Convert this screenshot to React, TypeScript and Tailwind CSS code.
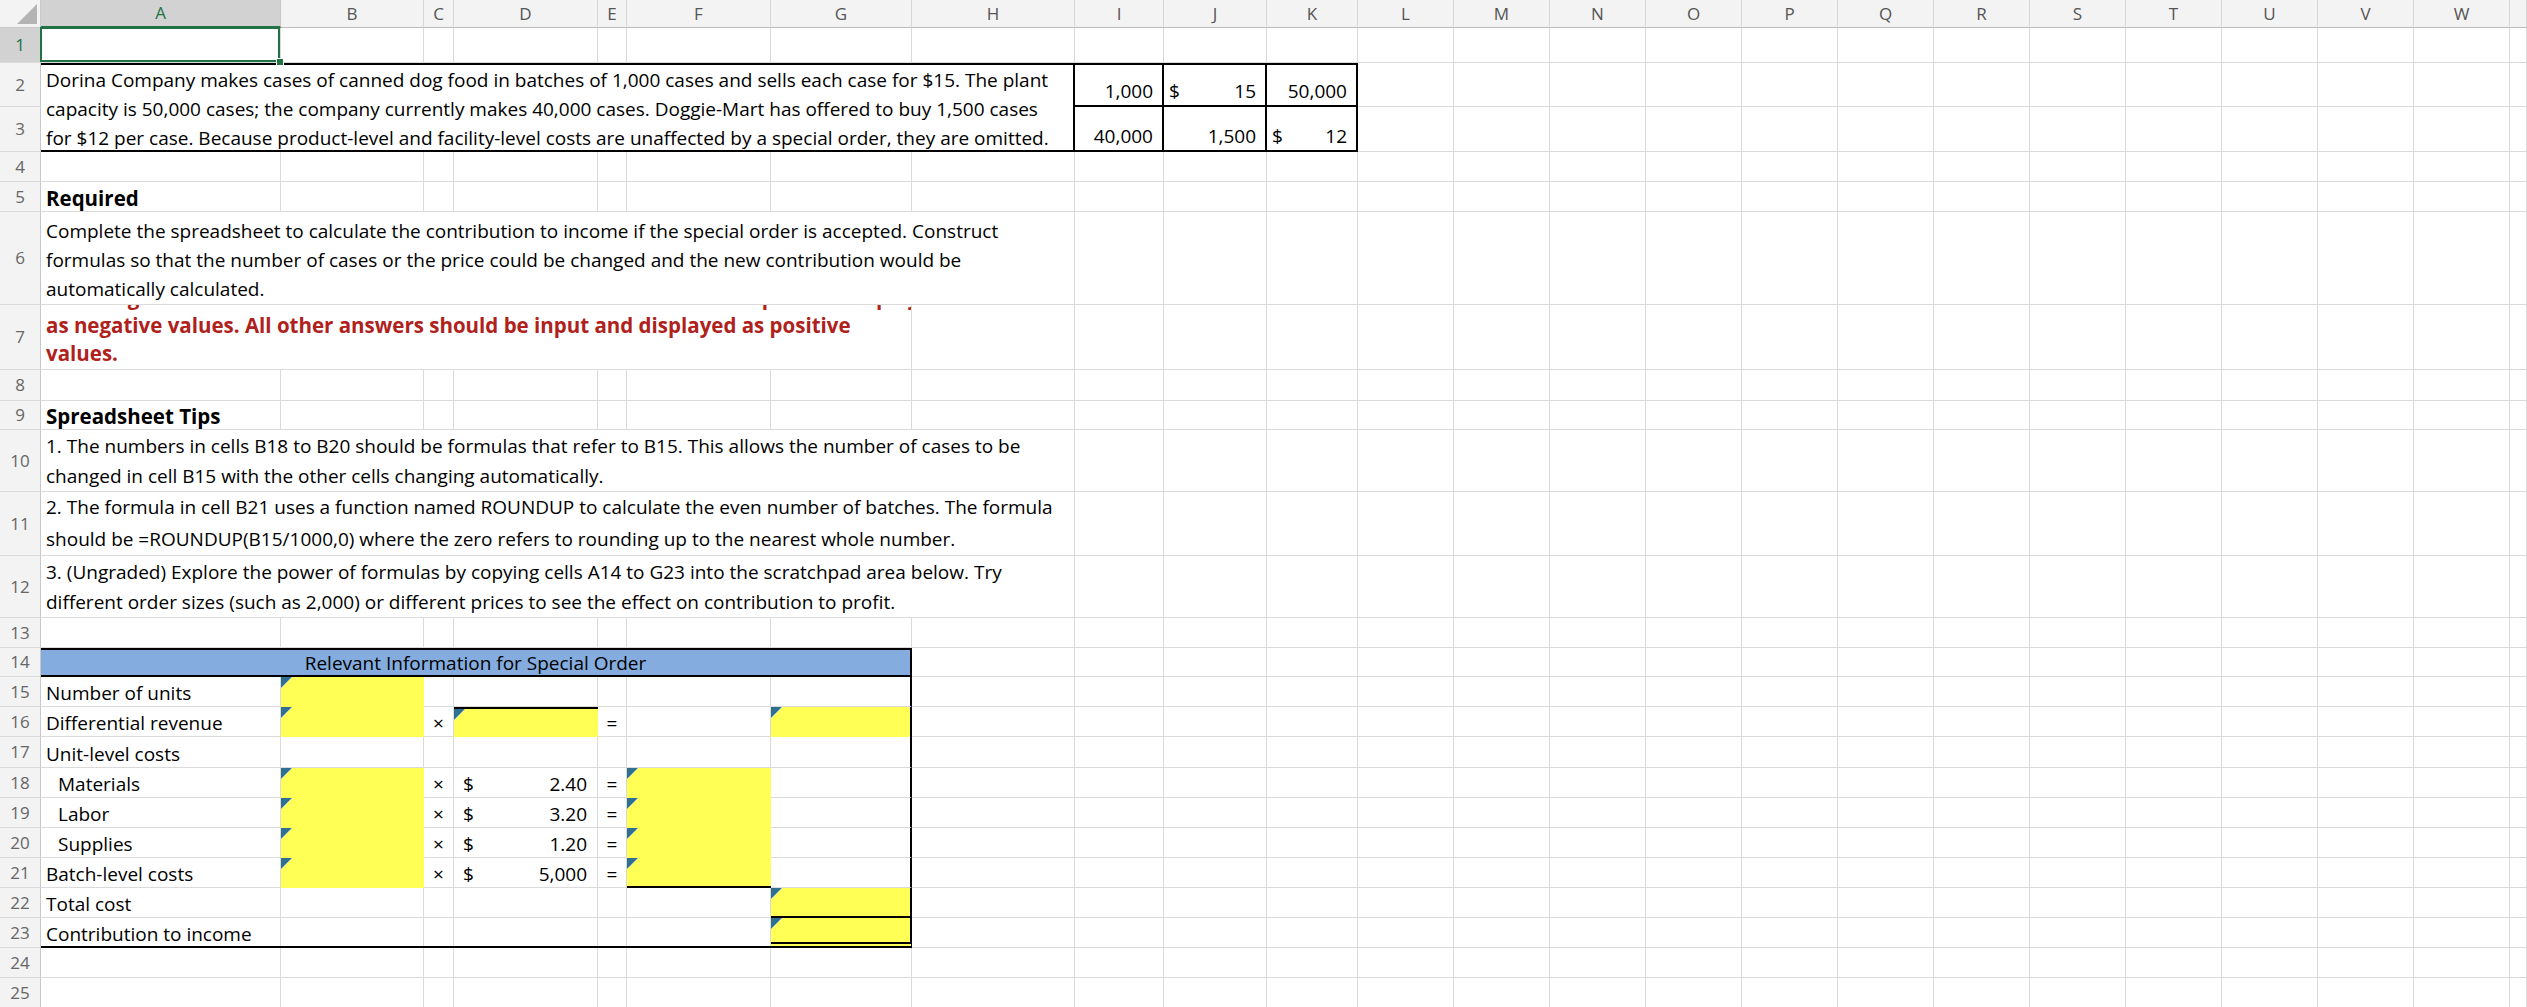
import React from "react";

// Excel-like sheet: one grid, cells auto-placed row by row
const G = "border-r border-b border-[#dadada]";
const YEL = "bg-[#ffff55]";

const COLS = ["A", "B", "C", "D", "E", "F", "G", "H", "I", "J", "K", "L", "M", "N", "O", "P", "Q", "R", "S", "T", "U", "V", "W", ""];

function Blanks({ n }: { n: number }) {
    return (
        <>
            {Array.from({ length: n }, (_, i) => (
                <div key={i} className={G} />
            ))}
        </>
    );
}

function RowHead({ n, active = false }: { n: number; active?: boolean }) {
    return (
        <div
            className={`flex items-center justify-center border-r border-b border-r-[#c8c8c8] border-b-[#dadada] text-[17px] ${
                active ? "bg-[#d2d2d2] text-[#217346]" : "bg-[#f3f3f3] text-[#666666]"
            }`}
        >
            {n}
        </div>
    );
}

function Tri() {
    return (
        <svg className="absolute left-0 top-0" width="11" height="11" viewBox="0 0 11 11">
            <polygon points="0,0 11,0 0,11" fill="#2f7090" />
            <line x1="11" y1="0" x2="0" y2="11" stroke="#9cc2d2" strokeWidth="1" />
        </svg>
    );
}

function Input({ className = "" }: { className?: string }) {
    return (
        <div className={`relative ${YEL} ${className}`}>
            <Tri />
        </div>
    );
}

function Txt({ children, className = "" }: { children?: React.ReactNode; className?: string }) {
    return (
        <div className={`${G} flex items-end pb-[2px] pl-[5px] leading-[22px] whitespace-nowrap ${className}`}>
            {children}
        </div>
    );
}

function Mid({ children, className = "" }: { children?: React.ReactNode; className?: string }) {
    return (
        <div className={`${G} flex items-end justify-center pb-[2px] leading-[22px] ${className}`}>{children}</div>
    );
}

function Money({ value }: { value: string }) {
    return (
        <div className={`${G} flex items-end justify-between pb-[2px] pl-[9px] pr-[10px] leading-[22px]`}>
            <span>$</span>
            <span>{value}</span>
        </div>
    );
}

export default function App() {
    return (
        <div className="w-[2527px] h-[1007px] overflow-hidden bg-white text-black text-[19px] font-['Open_Sans','Liberation_Sans',sans-serif]">
            <div className="grid grid-cols-[41px_240px_143px_30px_144px_29px_144px_141px_163px_89px_103px_91px_96px_96px_96px_96px_96px_96px_96px_96px_96px_96px_96px_96px_17px] grid-rows-[28px_35px_44px_45px_30px_30px_93px_65px_31px_29px_62px_64px_62px_30px_29px_30px_30px_31px_30px_30px_30px_30px_30px_30px_30px_30px]">
                {/* header row */}
                <div className="relative bg-[#f3f3f3] border-r border-b border-[#c8c8c8]">
                    <svg className="absolute right-[3px] bottom-[3px]" width="20" height="20" viewBox="0 0 20 20">
                        <polygon points="20,0 20,20 0,20" fill="#b4b4b4" />
                    </svg>
                </div>
                {COLS.map((c) =>
                    c === "A" ? (
                        <div
                            key={c}
                            className="flex items-center justify-center bg-[#d2d2d2] text-[#217346] text-[17px] border-r border-r-[#c8c8c8] border-b-2 border-b-[#217346]"
                        >
                            {c}
                        </div>
                    ) : (
                        <div
                            key={c || "x"}
                            className="flex items-center justify-center bg-[#f3f3f3] text-[#555555] text-[17px] border-r border-b border-r-[#d6d6d6] border-b-[#bdbdbd]"
                        >
                            {c}
                        </div>
                    )
                )}

                {/* row 1 */}
                <RowHead n={1} active />
                <div className={`${G} relative`}>
                    <div className="absolute -left-[1px] -top-[1px] right-0 bottom-0 border-2 border-[#217346]" />
                    <div className="absolute -right-[4px] -bottom-[4px] w-[8px] h-[8px] bg-[#217346] border border-white" />
                </div>
                <Blanks n={23} />

                {/* rows 2-3 */}
                <RowHead n={2} />
                <div className="col-span-8 row-span-2 flex flex-col justify-end border-t-2 border-b-2 border-r-2 border-black pl-[5px] leading-[29px] whitespace-nowrap">
                    <div className="translate-y-[3px]">
                        <div>Dorina Company makes cases of canned dog food in batches of 1,000 cases and sells each case for $15. The plant</div>
                        <div>capacity is 50,000 cases; the company currently makes 40,000 cases. Doggie-Mart has offered to buy 1,500 cases</div>
                        <div>for $12 per case. Because product-level and facility-level costs are unaffected by a special order, they are omitted.</div>
                    </div>
                </div>
                <div className="flex items-end justify-end pr-[9px] pb-[3px] leading-[22px] border-t-2 border-b-2 border-r-2 border-black">1,000</div>
                <div className="flex items-end justify-between pl-[5px] pr-[9px] pb-[3px] leading-[22px] border-t-2 border-b-2 border-r-2 border-black">
                    <span>$</span>
                    <span>15</span>
                </div>
                <div className="flex items-end justify-end pr-[9px] pb-[3px] leading-[22px] border-t-2 border-b-2 border-r-2 border-black">50,000</div>
                <Blanks n={13} />

                <RowHead n={3} />
                <div className="flex items-end justify-end pr-[9px] pb-[3px] leading-[22px] border-b-2 border-r-2 border-black">40,000</div>
                <div className="flex items-end justify-end pr-[9px] pb-[3px] leading-[22px] border-b-2 border-r-2 border-black">1,500</div>
                <div className="flex items-end justify-between pl-[5px] pr-[9px] pb-[3px] leading-[22px] border-b-2 border-r-2 border-black">
                    <span>$</span>
                    <span>12</span>
                </div>
                <Blanks n={13} />

                {/* row 4 */}
                <RowHead n={4} />
                <Blanks n={24} />

                {/* row 5 */}
                <RowHead n={5} />
                <Txt className="font-bold text-[20.5px]">Required</Txt>
                <Blanks n={23} />

                {/* row 6 */}
                <RowHead n={6} />
                <div className={`${G} col-span-8 flex flex-col justify-end pl-[5px] leading-[29px] whitespace-nowrap`}>
                    <div>Complete the spreadsheet to calculate the contribution to income if the special order is accepted. Construct</div>
                    <div>formulas so that the number of cases or the price could be changed and the new contribution would be</div>
                    <div>automatically calculated.</div>
                </div>
                <Blanks n={16} />

                {/* row 7 - first line is cut off by the row height */}
                <RowHead n={7} />
                <div className={`${G} col-span-7 overflow-hidden flex flex-col justify-end pl-[5px] pb-[2px] leading-[28px] font-bold text-[20.5px] text-[#b0211c] whitespace-nowrap`}>
                    <div>All changes to income that are reductions in contribution should be input and displayed</div>
                    <div>as negative values. All other answers should be input and displayed as positive</div>
                    <div>values.</div>
                </div>
                <Blanks n={17} />

                {/* row 8 */}
                <RowHead n={8} />
                <Blanks n={24} />

                {/* row 9 */}
                <RowHead n={9} />
                <Txt className="font-bold text-[20.5px]">Spreadsheet Tips</Txt>
                <Blanks n={23} />

                {/* rows 10-12 */}
                <RowHead n={10} />
                <div className={`${G} col-span-8 flex flex-col justify-end pl-[5px] leading-[30px] whitespace-nowrap`}>
                    <div>1. The numbers in cells B18 to B20 should be formulas that refer to B15. This allows the number of cases to be</div>
                    <div>changed in cell B15 with the other cells changing automatically.</div>
                </div>
                <Blanks n={16} />

                <RowHead n={11} />
                <div className={`${G} col-span-8 flex flex-col justify-end pl-[5px] leading-[32px] whitespace-nowrap`}>
                    <div>2. The formula in cell B21 uses a function named ROUNDUP to calculate the even number of batches. The formula</div>
                    <div>should be =ROUNDUP(B15/1000,0) where the zero refers to rounding up to the nearest whole number.</div>
                </div>
                <Blanks n={16} />

                <RowHead n={12} />
                <div className={`${G} col-span-8 flex flex-col justify-end pl-[5px] leading-[30px] whitespace-nowrap`}>
                    <div>3. (Ungraded) Explore the power of formulas by copying cells A14 to G23 into the scratchpad area below. Try</div>
                    <div>different order sizes (such as 2,000) or different prices to see the effect on contribution to profit.</div>
                </div>
                <Blanks n={16} />

                {/* row 13 */}
                <RowHead n={13} />
                <Blanks n={24} />

                {/* row 14: table title */}
                <RowHead n={14} />
                <div className="col-span-7 flex items-end justify-center pb-[1px] leading-[22px] bg-[#84acdf] border-t-2 border-b-2 border-r-2 border-black">
                    Relevant Information for Special Order
                </div>
                <Blanks n={17} />

                {/* row 15 */}
                <RowHead n={15} />
                <Txt>Number of units</Txt>
                <Input />
                <Mid />
                <Mid />
                <Mid />
                <Mid />
                <div className="border-r-2 border-b border-r-black border-b-[#dadada]" />
                <Blanks n={17} />

                {/* row 16 */}
                <RowHead n={16} />
                <Txt>Differential revenue</Txt>
                <Input />
                <Mid>×</Mid>
                <Input className="border-t-2 border-black" />
                <Mid>=</Mid>
                <Mid />
                <Input className="border-r-2 border-black" />
                <Blanks n={17} />

                {/* row 17 */}
                <RowHead n={17} />
                <Txt>Unit-level costs</Txt>
                <Mid />
                <Mid />
                <Mid />
                <Mid />
                <Mid />
                <div className="border-r-2 border-b border-r-black border-b-[#dadada]" />
                <Blanks n={17} />

                {/* rows 18-20 */}
                {[
                    ["Materials", "2.40", 18],
                    ["Labor", "3.20", 19],
                    ["Supplies", "1.20", 20],
                ].map(([label, price, n]) => (
                    <React.Fragment key={label as string}>
                        <RowHead n={n as number} />
                        <Txt className="pl-[17px]">{label}</Txt>
                        <Input />
                        <Mid>×</Mid>
                        <Money value={price as string} />
                        <Mid>=</Mid>
                        <Input />
                        <div className="border-r-2 border-b border-r-black border-b-[#dadada]" />
                        <Blanks n={17} />
                    </React.Fragment>
                ))}

                {/* row 21 */}
                <RowHead n={21} />
                <Txt>Batch-level costs</Txt>
                <Input />
                <Mid>×</Mid>
                <Money value="5,000" />
                <Mid>=</Mid>
                <Input className="border-b-2 border-black" />
                <div className="border-r-2 border-b border-r-black border-b-[#dadada]" />
                <Blanks n={17} />

                {/* row 22 */}
                <RowHead n={22} />
                <Txt>Total cost</Txt>
                <Mid />
                <Mid />
                <Mid />
                <Mid />
                <Mid />
                <Input className="border-r-2 border-b-2 border-black" />
                <Blanks n={17} />

                {/* row 23 */}
                <RowHead n={23} />
                <div className="col-span-6 grid grid-cols-[240px_143px_30px_144px_29px_144px] border-b-2 border-black">
                    <div className="flex items-end pb-[1px] pl-[5px] leading-[22px] whitespace-nowrap border-r border-r-[#dadada]">Contribution to income</div>
                    <div className="border-r border-r-[#dadada]" />
                    <div className="border-r border-r-[#dadada]" />
                    <div className="border-r border-r-[#dadada]" />
                    <div className="border-r border-r-[#dadada]" />
                    <div className="border-r border-r-[#dadada]" />
                </div>
                <Input className="border-r-2 border-b-[6px] border-double border-black" />
                <Blanks n={17} />

                {/* rows 24-25 */}
                <RowHead n={24} />
                <Blanks n={24} />
                <RowHead n={25} />
                <Blanks n={24} />
            </div>
        </div>
    );
}
